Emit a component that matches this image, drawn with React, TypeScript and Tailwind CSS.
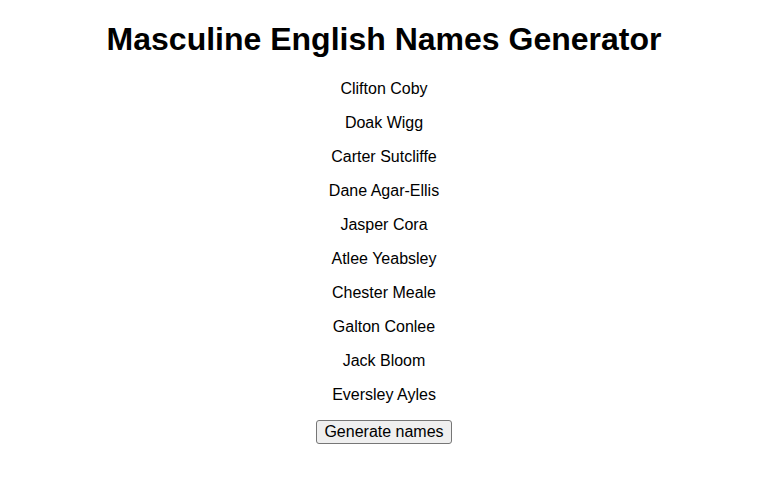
import React from 'react';

const NAMES = [
  'Clifton Coby',
  'Doak Wigg',
  'Carter Sutcliffe',
  'Dane Agar-Ellis',
  'Jasper Cora',
  'Atlee Yeabsley',
  'Chester Meale',
  'Galton Conlee',
  'Jack Bloom',
  'Eversley Ayles',
];

const App: React.FC = () => {
  return (
    <div className="min-h-screen bg-white text-black text-center font-['Liberation_Sans',Arial,sans-serif]">
      <h1 className="pt-[21px] pb-[22px] text-[32px] leading-[37px] font-bold">Masculine English Names Generator</h1>
      <div className="flex flex-col items-center">
        {NAMES.map((name) => (
          <p key={name} className="mb-4 text-base leading-[18px]">{name}</p>
        ))}
      </div>
      <button className="px-[7px] py-[2px] text-base leading-[18px] bg-[#efefef] border border-[#767676] rounded-[3px]">
        Generate names
      </button>
    </div>
  );
};

export default App;
